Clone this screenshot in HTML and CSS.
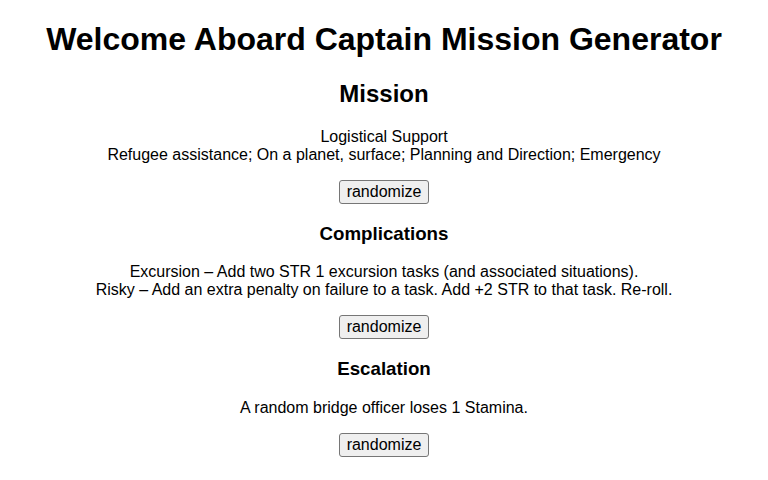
FILE: index.html
```html
<!DOCTYPE html>
<html lang="en">
<head>
    <meta charset="UTF-8">
    <meta name="viewport" content="width=device-width, initial-scale=1.0">
    <title>Welcome Aboard Captain Mission Generator</title>
    <link rel="stylesheet" href="styles.css">
</head>
<body>
<div class="generator">
    <h1>Welcome Aboard Captain Mission Generator</h1>

    <h2>Mission</h2>
    <p class="result">
        Logistical Support<br>
        Refugee assistance; On a planet, surface; Planning and Direction; Emergency
    </p>
    <div class="actions">
        <button class="randomize-btn" data-section="mission">randomize</button>
    </div>

    <h3>Complications</h3>
    <p class="result">
        Excursion – Add two STR 1 excursion tasks (and associated situations).<br>
        Risky – Add an extra penalty on failure to a task. Add +2 STR to that task. Re-roll.
    </p>
    <div class="actions">
        <button class="randomize-btn" data-section="complications">randomize</button>
    </div>

    <h3>Escalation</h3>
    <p class="result">A random bridge officer loses 1 Stamina.</p>
    <div class="actions">
        <button class="randomize-btn" data-section="escalation">randomize</button>
    </div>
</div>
</body>
</html>
```

FILE: styles.css
```css
body {
    margin: 0;
    font-family: "Liberation Sans", Arial, sans-serif;
    color: #000;
    background: #fff;
}

.generator {
    padding: 0 8px;
    text-align: center;
}

h1 {
    font-size: 32px;
    margin: 0.67em 0;
}

h2 {
    font-size: 24px;
    margin: 0.83em 0;
}

h3 {
    font-size: 18.72px;
    margin: 1em 0;
}

.result {
    margin: 16px 0;
}

.actions {
    margin: 16px 0;
}

.randomize-btn {
    font: inherit;
    color: #000;
    padding: 2px 7px;
    background: #efefef;
    border: 1px solid #767676;
    border-radius: 3px;
    cursor: pointer;
}
```
